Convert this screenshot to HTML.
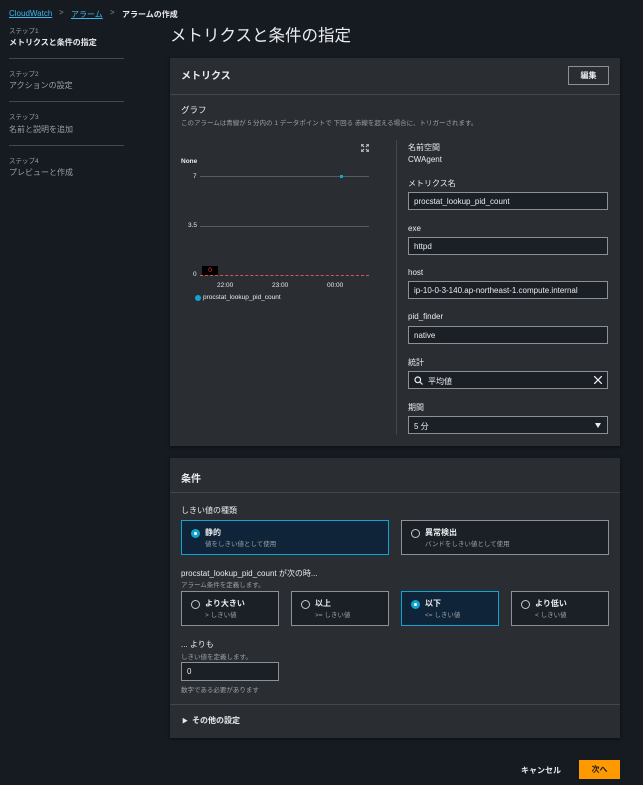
<!DOCTYPE html>
<html><head><meta charset="utf-8"><style>
*{box-sizing:border-box;margin:0;padding:0}
body{width:643px;height:785px;background:#161a21;font-family:"Liberation Sans","Noto Sans CJK JP",sans-serif;color:#d1d5db;position:relative;overflow:hidden;font-size:8px}
.a{position:absolute;white-space:nowrap}
.panel{position:absolute;left:170px;width:450px;background:#2a2e33;box-shadow:0 1px 3px rgba(0,0,0,.5)}
.inp{position:absolute;left:408px;width:200px;height:18px;background:#1b1f26;border:1px solid #8d9096;color:#e9ebed;font-size:8px;padding:4px 5px}
.lab{position:absolute;left:408px;font-size:8px;color:#e9ebed}
.tile{position:absolute;background:#1b1f26;border:1px solid #8d9096;height:35px}
.tile.sel{background:#0f2438;border-color:#0ea5d3}
.rad{position:absolute;left:9px;top:8px;width:9px;height:9px;border-radius:50%;border:1px solid #c6c8cc}
.sel .rad{border:3px solid #0ea5d3;background:#fff}
.tt{position:absolute;left:23px;top:6px;font-size:8px;color:#e9ebed;font-weight:bold}
.ts{position:absolute;left:23px;top:17px;font-size:6.5px;color:#9ba0a6}
.sm{font-size:6.5px;color:#9ba0a6}
</style></head><body>
<div class="a" style="left:9px;top:9px;font-size:8px;color:#3eb5ec;text-decoration:underline">CloudWatch</div>
<div class="a" style="left:59px;top:8px;color:#8d9096">&gt;</div>
<div class="a" style="left:71px;top:9px;font-size:8px;color:#3eb5ec;text-decoration:underline">アラーム</div>
<div class="a" style="left:110px;top:8px;color:#8d9096">&gt;</div>
<div class="a" style="left:122px;top:9px;font-size:8px;color:#e9ebed;font-weight:bold">アラームの作成</div>
<div class="a sm" style="left:9px;top:25px">ステップ1</div>
<div class="a" style="left:9px;top:37px;font-weight:bold;color:#e9ebed">メトリクスと条件の指定</div>
<div class="a" style="left:9px;top:58px;width:115px;border-top:1px solid #414750"></div>
<div class="a sm" style="left:9px;top:68px">ステップ2</div>
<div class="a" style="left:9px;top:80px;color:#9ba0a6">アクションの設定</div>
<div class="a" style="left:9px;top:101px;width:115px;border-top:1px solid #414750"></div>
<div class="a sm" style="left:9px;top:111px">ステップ3</div>
<div class="a" style="left:9px;top:124px;color:#9ba0a6">名前と説明を追加</div>
<div class="a" style="left:9px;top:145px;width:115px;border-top:1px solid #414750"></div>
<div class="a sm" style="left:9px;top:155px">ステップ4</div>
<div class="a" style="left:9px;top:167px;color:#9ba0a6">プレビューと作成</div>
<div class="a" style="left:170px;top:22px;font-size:16.5px;color:#e9ebed">メトリクスと条件の指定</div>

<div class="panel" style="top:58px;height:388px"></div>
<div class="a" style="left:170px;top:94px;width:450px;border-top:1px solid #414750"></div>
<div class="a" style="left:181px;top:67px;font-size:10px;font-weight:bold;color:#e9ebed">メトリクス</div>
<div class="a" style="left:568px;top:66px;width:41px;height:19px;border:1px solid #8d9096;color:#e9ebed;font-weight:bold;text-align:center;line-height:17px">編集</div>
<div class="a" style="left:181px;top:104px;font-size:8.5px;color:#e9ebed">グラフ</div>
<div class="a sm" style="left:181px;top:117px">このアラームは青線が 5 分内の 1 データポイントで 下回る 赤線を超える場合に、トリガーされます。</div>
<svg class="a" style="left:361px;top:144px" width="8" height="8" viewBox="0 0 8 8" fill="none" stroke="#c6c8cc" stroke-width="1.2"><path d="M0 3V0h3M5 0h3v3M8 5v3H5M3 8H0V5M1 1l2 2M7 1L5 3M7 7L5 5M1 7l2-2"/></svg>
<div class="a" style="left:181px;top:158px;font-size:6.5px;font-weight:bold;color:#e9ebed">None</div>
<div class="a" style="left:193px;top:173px;font-size:6.5px;color:#e9ebed">7</div>
<div class="a" style="left:200px;top:176px;width:169px;border-top:1px solid #555b63"></div>
<div class="a" style="left:340px;top:175px;width:3px;height:3px;background:#0ea5d3"></div>
<div class="a" style="left:188px;top:222px;font-size:6.5px;color:#e9ebed">3.5</div>
<div class="a" style="left:200px;top:226px;width:169px;border-top:1px solid #555b63"></div>
<div class="a" style="left:193px;top:271px;font-size:6.5px;color:#e9ebed">0</div>
<div class="a" style="left:200px;top:275px;width:169px;border-top:1px dashed #e05050"></div>
<div class="a" style="left:202px;top:266px;width:16px;height:9px;background:#000;color:#ff4040;font-size:6.5px;text-align:center;line-height:9px">0</div>
<div class="a" style="left:217px;top:282px;font-size:6.5px;color:#e9ebed">22:00</div>
<div class="a" style="left:272px;top:282px;font-size:6.5px;color:#e9ebed">23:00</div>
<div class="a" style="left:327px;top:282px;font-size:6.5px;color:#e9ebed">00:00</div>
<div class="a" style="left:195px;top:295px;width:6px;height:6px;border-radius:50%;background:#0ea5d3"></div>
<div class="a" style="left:203px;top:294px;font-size:6.5px;color:#e9ebed">procstat_lookup_pid_count</div>
<div class="a" style="left:396px;top:140px;height:295px;border-left:1px solid #414750"></div>
<div class="lab" style="top:142px">名前空間</div>
<div class="lab" style="top:155px">CWAgent</div>
<div class="lab" style="top:178px">メトリクス名</div>
<div class="inp" style="top:192px">procstat_lookup_pid_count</div>
<div class="lab" style="top:224px">exe</div>
<div class="inp" style="top:237px">httpd</div>
<div class="lab" style="top:268px">host</div>
<div class="inp" style="top:281px">ip-10-0-3-140.ap-northeast-1.compute.internal</div>
<div class="lab" style="top:312px">pid_finder</div>
<div class="inp" style="top:326px">native</div>
<div class="lab" style="top:357px">統計</div>
<div class="inp" style="top:371px;padding-left:19px">平均値
<svg style="position:absolute;left:5px;top:4px" width="9" height="9" viewBox="0 0 9 9" fill="none" stroke="#e9ebed" stroke-width="1.2"><circle cx="3.8" cy="3.8" r="2.8"/><path d="M6 6l2.5 2.5"/></svg>
<svg style="position:absolute;right:5px;top:4px" width="8" height="8" viewBox="0 0 8 8" stroke="#e9ebed" stroke-width="1.3"><path d="M0 0l8 8M8 0L0 8"/></svg></div>
<div class="lab" style="top:402px">期間</div>
<div class="inp" style="top:416px">5 分
<svg style="position:absolute;right:6px;top:6px" width="6" height="5" viewBox="0 0 6 5"><path d="M0 0h6L3 5z" fill="#e9ebed"/></svg></div>

<div class="panel" style="top:458px;height:280px"></div>
<div class="a" style="left:170px;top:492px;width:450px;border-top:1px solid #414750"></div>
<div class="a" style="left:181px;top:470px;font-size:10px;font-weight:bold;color:#e9ebed">条件</div>
<div class="a" style="left:181px;top:505px;color:#e9ebed">しきい値の種類</div>
<div class="tile sel" style="left:181px;top:520px;width:208px"><div class="rad"></div><div class="tt">静的</div><div class="ts">値をしきい値として使用</div></div>
<div class="tile" style="left:401px;top:520px;width:208px"><div class="rad"></div><div class="tt">異常検出</div><div class="ts">バンドをしきい値として使用</div></div>
<div class="a" style="left:181px;top:568px;color:#e9ebed">procstat_lookup_pid_count が次の時...</div>
<div class="a sm" style="left:181px;top:579px">アラーム条件を定義します。</div>
<div class="tile" style="left:181px;top:591px;width:98px"><div class="rad"></div><div class="tt">より大きい</div><div class="ts">&gt; しきい値</div></div>
<div class="tile" style="left:291px;top:591px;width:98px"><div class="rad"></div><div class="tt">以上</div><div class="ts">&gt;= しきい値</div></div>
<div class="tile sel" style="left:401px;top:591px;width:98px"><div class="rad"></div><div class="tt">以下</div><div class="ts">&lt;= しきい値</div></div>
<div class="tile" style="left:511px;top:591px;width:98px"><div class="rad"></div><div class="tt">より低い</div><div class="ts">&lt; しきい値</div></div>
<div class="a" style="left:181px;top:639px;color:#e9ebed">... よりも</div>
<div class="a sm" style="left:181px;top:651px">しきい値を定義します。</div>
<div class="a" style="left:181px;top:662px;width:98px;height:19px;background:#1b1f26;border:1px solid #8d9096;color:#e9ebed;padding:4px 5px">0</div>
<div class="a sm" style="left:181px;top:684px">数字である必要があります</div>
<div class="a" style="left:170px;top:704px;width:450px;border-top:1px solid #414750"></div>
<div class="a" style="left:182px;top:716px;font-size:6px;color:#e9ebed">▶</div>
<div class="a" style="left:192px;top:715px;font-weight:bold;color:#e9ebed">その他の設定</div>

<div class="a" style="left:521px;top:765px;font-weight:bold;color:#e9ebed">キャンセル</div>
<div class="a" style="left:579px;top:760px;width:41px;height:19px;background:#ff9900;color:#161a21;text-align:center;line-height:19px;font-weight:bold">次へ</div>
</body></html>
